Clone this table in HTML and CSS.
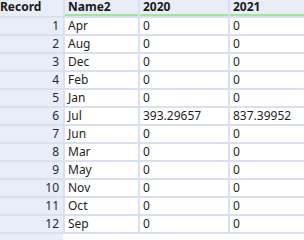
FILE: index.html
```html
<!DOCTYPE html>
<html>
<head>
<meta charset="utf-8">
<link rel="stylesheet" href="styles.css">
</head>
<body>
<div class="grid">
  <div class="hd rec">Record</div>
  <div class="hd col">Name2</div>
  <div class="hd col">2020</div>
  <div class="hd col">2021</div>

  <div class="num">1</div><div class="cell">Apr</div><div class="cell">0</div><div class="cell">0</div>
  <div class="num">2</div><div class="cell">Aug</div><div class="cell">0</div><div class="cell">0</div>
  <div class="num">3</div><div class="cell">Dec</div><div class="cell">0</div><div class="cell">0</div>
  <div class="num">4</div><div class="cell">Feb</div><div class="cell">0</div><div class="cell">0</div>
  <div class="num">5</div><div class="cell">Jan</div><div class="cell">0</div><div class="cell">0</div>
  <div class="num">6</div><div class="cell">Jul</div><div class="cell">393.29657</div><div class="cell">837.39952</div>
  <div class="num">7</div><div class="cell">Jun</div><div class="cell">0</div><div class="cell">0</div>
  <div class="num">8</div><div class="cell">Mar</div><div class="cell">0</div><div class="cell">0</div>
  <div class="num">9</div><div class="cell">May</div><div class="cell">0</div><div class="cell">0</div>
  <div class="num">10</div><div class="cell">Nov</div><div class="cell">0</div><div class="cell">0</div>
  <div class="num">11</div><div class="cell">Oct</div><div class="cell">0</div><div class="cell">0</div>
  <div class="num">12</div><div class="cell">Sep</div><div class="cell">0</div><div class="cell">0</div>
</div>
<div class="filler"></div>
</body>
</html>
```
FILE: styles.css
```css
html, body {
  margin: 0;
  padding: 0;
  background: #ffffff;
  overflow: hidden;
}
body {
  width: 304px;
  height: 240px;
  font-family: "Noto Sans", "Open Sans", sans-serif;
  font-size: 12px;
  color: #1e1e1e;
  display: flex;
  flex-direction: column;
}
.grid {
  display: grid;
  grid-template-columns: 63px 73px 88px 74px;
  grid-auto-rows: 16px;
  column-gap: 2px;
  row-gap: 2px;
  background: #d9e0ee;
  padding-bottom: 2px;
  width: 304px;
}
.hd {
  background: #e9edf7;
  font-weight: bold;
  line-height: 14px;
  height: 14px;
  color: #1a1a1a;
  white-space: nowrap;
}
.hd.col {
  border-bottom: 2px solid #9ee98b;
  padding-left: 3px;
}
.hd.rec {
  height: 16px;
}
.num {
  background: #e9edf7;
  text-align: right;
  padding-right: 4px;
  line-height: 16px;
  color: #2a2a2a;
}
.cell {
  background: #ffffff;
  padding-left: 3px;
  line-height: 16px;
  white-space: nowrap;
}
.filler {
  width: 63px;
  flex: 1;
  background: #e9edf7;
}
```
